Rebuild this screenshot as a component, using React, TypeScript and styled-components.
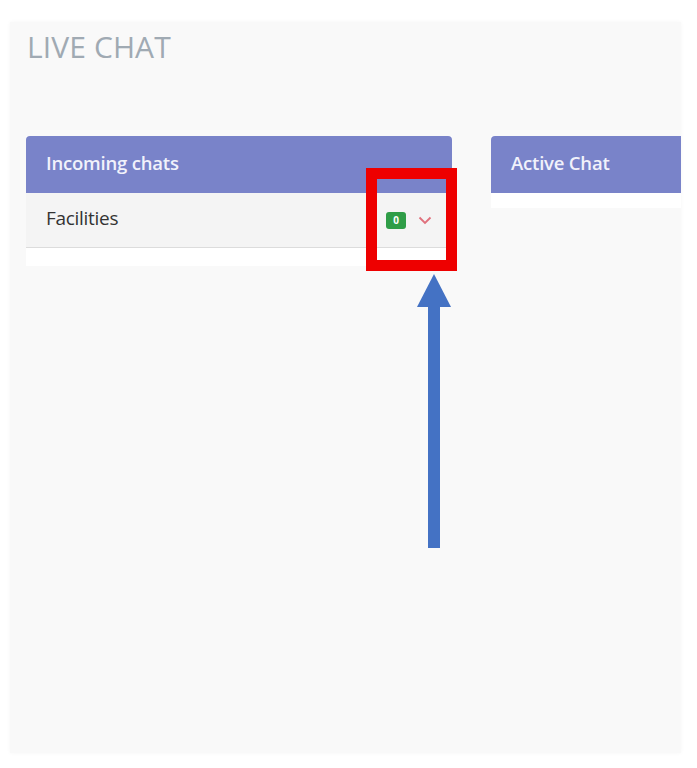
import React from 'react';
import styled, { createGlobalStyle } from 'styled-components';

const GlobalStyle = createGlobalStyle`
  html, body {
    margin: 0;
    padding: 0;
    background: #ffffff;
    font-family: 'Open Sans', 'Noto Sans', sans-serif;
  }
`;

const Page = styled.div`
  position: relative;
  width: 697px;
  height: 768px;
  padding: 22px 0 0 10px;
  box-sizing: border-box;
`;

const Panel = styled.div`
  width: 671px;
  height: 731px;
  background: #f9f9f9;
  box-shadow: 0 0 4px rgba(0, 0, 0, 0.04);
  overflow: hidden;
  padding: 8px 0 0 16px;
  box-sizing: border-box;
`;

const Title = styled.h1`
  margin: 0 0 0 1px;
  font-size: 30px;
  font-weight: 400;
  color: #a0aab3;
  letter-spacing: 0.1px;
  line-height: 34px;
`;

const Columns = styled.div`
  display: flex;
  gap: 39px;
  margin-top: 72px;
  align-items: flex-start;
`;

const Card = styled.div<{ width: number; tail: number }>`
  width: ${p => p.width}px;
  flex-shrink: 0;
  background: #ffffff;
  padding-bottom: ${p => p.tail}px;
`;

const CardHeader = styled.div`
  height: 57px;
  background: #7983c9;
  border-radius: 4px 4px 0 0;
  display: flex;
  align-items: center;
  padding: 0 20px 5px;
  box-sizing: border-box;
  color: #f1f2fb;
  font-size: 18.5px;
  font-weight: 600;
  letter-spacing: -0.2px;
`;

const Row = styled.div`
  height: 55px;
  background: #f4f4f4;
  border-bottom: 1px solid #dcdcdc;
  display: flex;
  align-items: center;
  padding: 0 20px 4px;
  box-sizing: border-box;
  font-size: 19px;
  color: #333333;
  letter-spacing: -0.3px;
`;

const RowName = styled.span`
  flex: 1;
`;

const RowTools = styled.div`
  display: flex;
  align-items: center;
  gap: 12px;
  margin-top: 4px;
`;

const CountBadge = styled.span`
  width: 20px;
  height: 17px;
  border-radius: 3px;
  background: #2f9d47;
  color: #ffffff;
  font-size: 10px;
  font-weight: 700;
  display: flex;
  align-items: center;
  justify-content: center;
`;

const Highlight = styled.div`
  position: absolute;
  left: 366px;
  top: 168px;
  width: 91px;
  height: 103px;
  border: 11px solid #ee0000;
  box-sizing: border-box;
`;

const Arrow = styled.svg`
  position: absolute;
  left: 416px;
  top: 273px;
`;

export default function App() {
  return (
    <>
      <GlobalStyle />
      <Page>
        <Panel>
          <Title>LIVE CHAT</Title>
          <Columns>
            <Card width={426} tail={18}>
              <CardHeader>Incoming chats</CardHeader>
              <Row>
                <RowName>Facilities</RowName>
                <RowTools>
                  <CountBadge>0</CountBadge>
                  <svg width="14" height="9" viewBox="0 0 14 9">
                    <path d="M1.5 1.5 L7 7 L12.5 1.5" fill="none" stroke="#e0707c" strokeWidth="1.8" />
                  </svg>
                </RowTools>
              </Row>
            </Card>
            <Card width={200} tail={15}>
              <CardHeader>Active Chat</CardHeader>
            </Card>
          </Columns>
        </Panel>
        <Highlight />
        <Arrow width="36" height="278" viewBox="0 0 36 278">
          <polygon points="18,1 35,34 1,34" fill="#4472c4" />
          <rect x="12" y="33" width="12" height="242" fill="#4472c4" />
        </Arrow>
      </Page>
    </>
  );
}
